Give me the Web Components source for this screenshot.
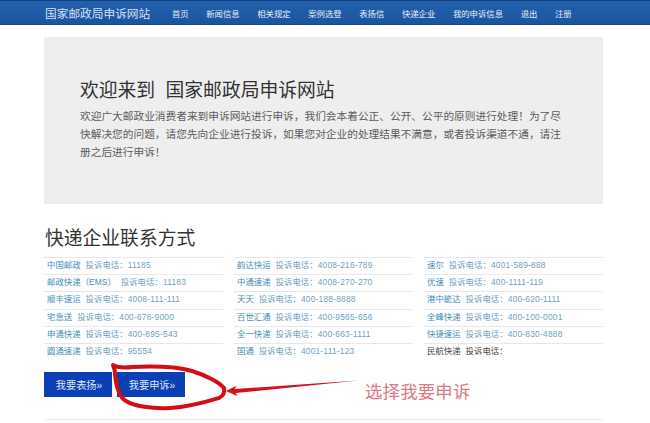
<!DOCTYPE html>
<html lang="zh"><head><meta charset="utf-8"><title>国家邮政局申诉网站</title>
<style>
html,body{margin:0;padding:0;background:#fff;height:423px;overflow:hidden}
body{font-family:"Liberation Sans","Noto Sans CJK SC",sans-serif;position:relative}
</style></head><body>
<site-nav brand="国家邮政局申诉网站" items="首页,新闻信息,相关规定,案例选登,表扬信,快递企业,我的申诉信息,退出,注册"></site-nav>
<page-main>
  <hero-box heading="欢迎来到&#160;&#160;国家邮政局申诉网站">欢迎广大邮政业消费者来到申诉网站进行申诉，我们会本着公正、公开、公平的原则进行处理！为了尽快解决您的问题，请您先向企业进行投诉，如果您对企业的处理结果不满意，或者投诉渠道不通，请注册之后进行申诉！</hero-box>
  <contact-list heading="快递企业联系方式"></contact-list>
  <action-row></action-row>
</page-main>
<red-note></red-note>
<script>
function def(name,css,html,init){
  customElements.define(name,class extends HTMLElement{
    connectedCallback(){
      if(this.shadowRoot)return;
      const r=this.attachShadow({mode:'open'});
      r.innerHTML='<style>'+css+'</style>'+(typeof html==='function'?html(this):html);
      if(init)init(r,this);
    }
  });
}
def('site-nav',`
:host{display:block;height:25px;box-sizing:border-box;border-top:1px solid #12407f;border-bottom:1px solid #174a8c;background:linear-gradient(#2260ac,#1b559f)}
nav{display:flex;align-items:center;height:100%;padding-left:45px;color:#dfe8f4;white-space:nowrap}
b{font-weight:400;font-size:11.7px;width:127px;color:#d5e0ef}
a{font-size:8.4px;margin-right:17.5px;color:#e6edf6}
`,h=>`<nav><b>${h.getAttribute('brand')}</b>${h.getAttribute('items').split(',').map(t=>`<a>${t}</a>`).join('')}</nav>`);
def('page-main',`:host{display:block;padding:12px 47px 0 44px}`,'<slot></slot>');
def('hero-box',`
:host{display:block;height:167px;box-sizing:border-box;background:#eee;padding:42px 36px 0 36px;color:#444}
h1{margin:0 0 5px;font-weight:400;font-size:18.8px;line-height:24px;color:#333;white-space:nowrap}
p{margin:0;font-size:10.7px;line-height:17.8px;color:#5c5c5c}
`,h=>`<h1>${h.getAttribute('heading')}</h1><p><slot></slot></p>`);
const rows=[
[['中国邮政','11185'],['韵达快运','4008-216-789'],['速尔','4001-589-888']],
[['邮政快递（EMS）','11183'],['中通速递','4008-270-270'],['优速','400-1111-119']],
[['顺丰速运','4008-111-111'],['天天','400-188-8888'],['港中能达','400-620-1111']],
[['宅急送','400-678-9000'],['百世汇通','400-9565-656'],['全峰快递','400-100-0001']],
[['申通快递','400-895-543'],['全一快递','400-663-1111'],['快捷速运','400-830-4888']],
[['圆通速递','95554'],['国通','4001-111-123'],['民航快递','']]];
def('contact-list',`
:host{display:block;margin-top:22px}
h2{margin:0 0 5px 1px;font-weight:400;font-size:18.8px;line-height:26px;color:#333;white-space:nowrap}
.g{display:grid;grid-template-columns:repeat(3,179px);column-gap:11px}
.c{height:17.2px;line-height:15.8px;box-sizing:border-box;border-top:1px solid #e8e8e8;font-size:8.4px;padding-left:3px;white-space:nowrap;color:#6f9fbd;letter-spacing:.05px}
a{color:#3f8cb5;margin-right:2.5px}
s{text-decoration:none;letter-spacing:.22px}
.d,.d a{color:#444}
`,h=>{
  let s='';
  rows.forEach(r=>r.forEach(([n,p])=>{
    s+= p?`<div class="c"><a>${n}</a> 投诉电话：<s>${p}</s></div>`:`<div class="c d"><a>${n}</a> 投诉电话：</div>`;
  }));
  return `<h2>${h.getAttribute('heading')}</h2><div class="g">${s}</div>`;
});
def('action-row',`
:host{display:flex;gap:5px;margin-top:12px}
a{display:flex;align-items:center;justify-content:center;height:25px;width:68px;background:#0b40b5;color:#dfe6f7;font-size:10.2px;white-space:nowrap;box-sizing:border-box;padding-left:2px}
`,`<a>我要表扬»</a><a>我要申诉»</a>`);
def('red-note',`
:host{position:absolute;left:0;top:0;width:650px;height:423px;pointer-events:none}
svg{position:absolute;left:0;top:0}
span{position:absolute;left:365px;top:379px;font:17.4px/24px "Noto Sans CJK SC",serif;color:#dc7880;white-space:nowrap;letter-spacing:.2px}
i{position:absolute;left:44px;right:47px;top:419px;height:1px;background:#eee}
`,`<i></i><svg width="650" height="423" viewBox="0 0 650 423">
<path d="M113 365 C118 368 124 368 132 367 C155 366 178 367 192 371 C205 375 219 382 224 388 C225 393 223 396 219 398 C206 402 190 407 170 408 C152 409 134 406 126 401 C119 397 116 385 115 374 C115 370 114 367 113 365Z" fill="none" stroke="#d40c14" stroke-width="4" stroke-linejoin="round"/>
<path d="M226 391 L236 386 L235 389 L358 380.5 L236 393 L237 396Z" fill="#d8101a"/>
</svg><span>选择我要申诉</span>`);
</script>
</body></html>
